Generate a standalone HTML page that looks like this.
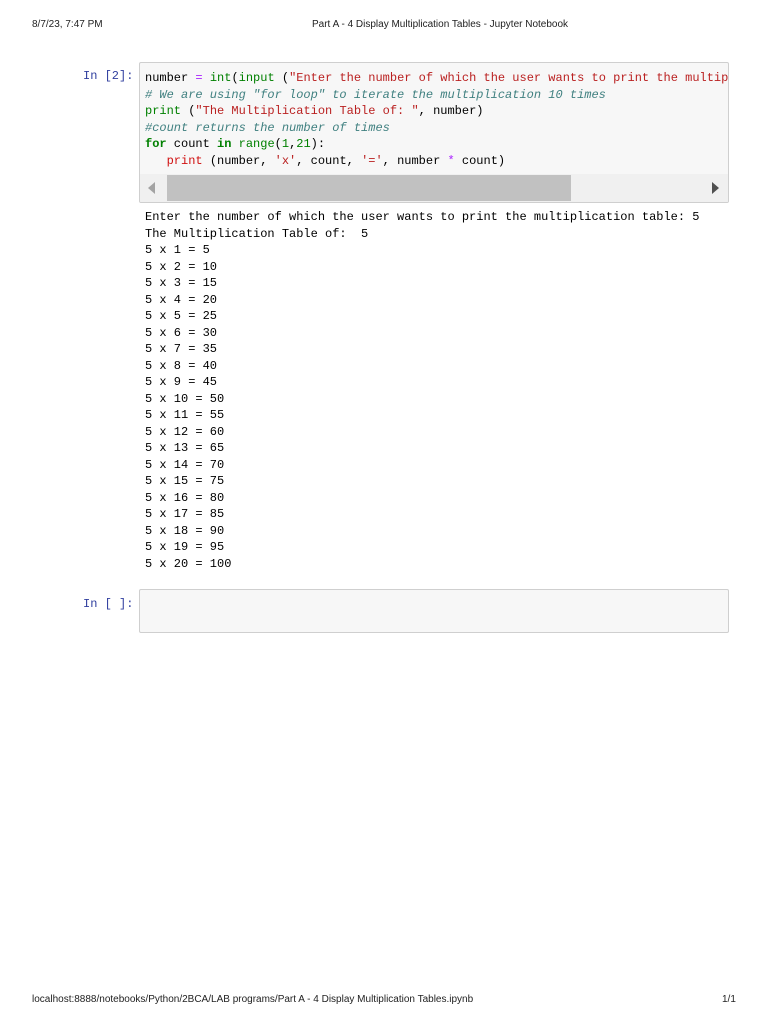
<!DOCTYPE html>
<html><head><style>
body{margin:0;width:768px;height:1024px;background:#fff;position:relative;font-family:"Liberation Sans",sans-serif;overflow:hidden}
.hdr{position:absolute;top:19px;font-size:10px;color:#222}
.mono{font-family:"Liberation Mono",monospace;font-size:12px;line-height:16.5px;white-space:pre;position:absolute}
.p{position:absolute;font-family:"Liberation Mono",monospace;font-size:12px;color:#303f9f}
.box{position:absolute;left:139px;width:588px;border:1px solid #cfcfcf;background:#f7f7f7;border-radius:2px}
.g{color:#008000}.s{color:#ba2121}.c{color:#408080;font-style:italic}.o{color:#aa22ff}.k{color:#008000;font-weight:bold}.r{color:#d01010}
</style></head><body>
<div class="hdr" style="left:32px">8/7/23, 7:47 PM</div>
<div class="hdr" style="left:312px">Part A - 4 Display Multiplication Tables - Jupyter Notebook</div>
<div class="p" style="left:83px;top:69px">In [2]:</div>
<div class="box" style="top:62px;height:139px;overflow:hidden">
<div class="mono" style="left:5px;top:7px;color:#000">number <span class="o">=</span> <span class="g">int</span>(<span class="g">input</span> (<span class="s">"Enter the number of which the user wants to print the multiplication table: "</span>))
<span class="c"># We are using "for loop" to iterate the multiplication 10 times</span>
<span class="g">print</span> (<span class="s">"The Multiplication Table of: "</span>, number)
<span class="c">#count returns the number of times</span>
<span class="k">for</span> count <span class="k">in</span> <span class="g">range</span>(<span class="g">1</span>,<span class="g">21</span>):
   <span class="r">print</span> (number, <span class="s">'x'</span>, count, <span class="s">'='</span>, number <span class="o">*</span> count)</div>
<div style="position:absolute;left:0;top:111px;width:588px;height:28px;background:#f0f0f0"></div>
<div style="position:absolute;left:27px;top:112px;width:404px;height:26px;background:#c1c1c1"></div>
<div style="position:absolute;left:8px;top:119px;width:0;height:0;border-top:6px solid transparent;border-bottom:6px solid transparent;border-right:7px solid #a3a3a3"></div>
<div style="position:absolute;left:572px;top:119px;width:0;height:0;border-top:6px solid transparent;border-bottom:6px solid transparent;border-left:7px solid #505050"></div>
</div>
<div class="mono" style="left:145px;top:209px;color:#000">Enter the number of which the user wants to print the multiplication table: 5
The Multiplication Table of:  5
5 x 1 = 5
5 x 2 = 10
5 x 3 = 15
5 x 4 = 20
5 x 5 = 25
5 x 6 = 30
5 x 7 = 35
5 x 8 = 40
5 x 9 = 45
5 x 10 = 50
5 x 11 = 55
5 x 12 = 60
5 x 13 = 65
5 x 14 = 70
5 x 15 = 75
5 x 16 = 80
5 x 17 = 85
5 x 18 = 90
5 x 19 = 95
5 x 20 = 100</div>
<div class="p" style="left:83px;top:597px">In [ ]:</div>
<div class="box" style="top:589px;height:42px"></div>
<div class="hdr" style="left:32px;top:994px">localhost:8888/notebooks/Python/2BCA/LAB programs/Part A - 4 Display Multiplication Tables.ipynb</div>
<div class="hdr" style="left:722px;top:994px">1/1</div>
</body></html>
